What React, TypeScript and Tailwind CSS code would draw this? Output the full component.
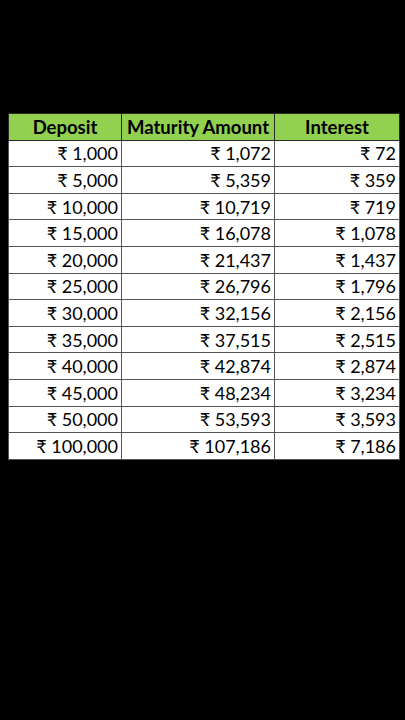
import React from "react";

const rows: [string, string, string][] = [
  ["1,000", "1,072", "72"],
  ["5,000", "5,359", "359"],
  ["10,000", "10,719", "719"],
  ["15,000", "16,078", "1,078"],
  ["20,000", "21,437", "1,437"],
  ["25,000", "26,796", "1,796"],
  ["30,000", "32,156", "2,156"],
  ["35,000", "37,515", "2,515"],
  ["40,000", "42,874", "2,874"],
  ["45,000", "48,234", "3,234"],
  ["50,000", "53,593", "3,593"],
  ["100,000", "107,186", "7,186"],
];

export default function App() {
  return (
    <div className="w-[405px] h-[720px] bg-black pt-[113px] pl-[8px]" style={{ fontFamily: "Lato, 'Noto Sans', sans-serif" }}>
      <table className="border-collapse text-black">
        <thead>
          <tr className="bg-[#92d050] h-[26.6px]">
            <th className="w-[113px] border border-[#2a2a2a] text-[18.5px] font-bold text-center p-0 leading-none">Deposit</th>
            <th className="w-[153px] border border-[#2a2a2a] text-[18.5px] font-bold text-center p-0 leading-none">Maturity Amount</th>
            <th className="w-[125px] border border-[#2a2a2a] text-[18.5px] font-bold text-center p-0 leading-none">Interest</th>
          </tr>
        </thead>
        <tbody>
          {rows.map((r, i) => (
            <tr key={i} className="bg-white h-[26.6px]">
              {r.map((c, j) => (
                <td key={j} className="border border-[#555] text-[18px] text-right pr-[3px] py-0 leading-none">
                  ₹ {c}
                </td>
              ))}
            </tr>
          ))}
        </tbody>
      </table>
    </div>
  );
}
